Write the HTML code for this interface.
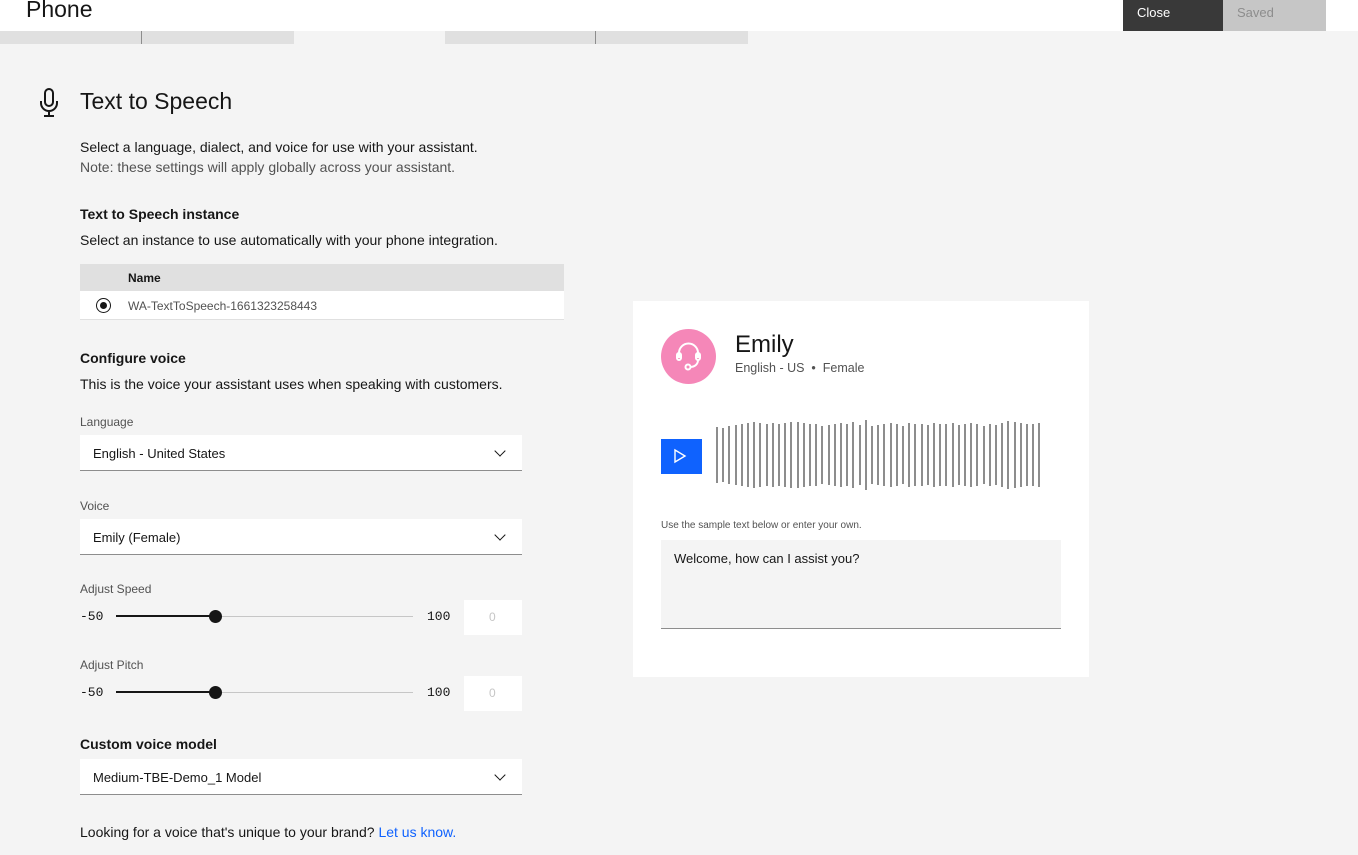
<!DOCTYPE html>
<html><head><meta charset="utf-8"><style>
*{box-sizing:border-box;margin:0;padding:0}
body{width:1358px;height:855px;overflow:hidden;background:#f4f4f4;font-family:"Liberation Sans",sans-serif;color:#161616;position:relative}
.a{position:absolute}
.top{left:0;top:0;width:1358px;height:31px;background:#fff}
.lbl{font-size:12px;color:#525252}
.sel{background:#fff;border-bottom:1px solid #8d8d8d;width:442px;height:36px;font-size:13px;padding:11px 13px}
.chev{position:absolute;right:18px;top:12px;width:8px;height:8px;border-right:1.5px solid #161616;border-bottom:1.5px solid #161616;transform:rotate(45deg)}
.mono{font-family:"Liberation Mono",monospace;font-size:13px}
</style></head><body>
<div class="a top"></div>
<div class="a" style="left:26px;top:-4px;font-size:23px">Phone</div>
<div class="a" style="left:1123px;top:0;width:100px;height:31px;background:#393939;color:#fff;font-size:13px;padding:5px 14px">Close</div>
<div class="a" style="left:1223px;top:0;width:103px;height:31px;background:#c6c6c6;color:#8d8d8d;font-size:13px;padding:5px 14px">Saved</div>
<div class="a" style="left:0;top:31px;width:1358px;height:13px;background:#fff"></div>
<div class="a" style="left:0;top:31px;width:294px;height:13px;background:#e0e0e0"></div>
<div class="a" style="left:141px;top:31px;width:1px;height:13px;background:#8d8d8d"></div>
<div class="a" style="left:294px;top:31px;width:151px;height:13px;background:#f4f4f4"></div>
<div class="a" style="left:445px;top:31px;width:303px;height:13px;background:#e0e0e0"></div>
<div class="a" style="left:595px;top:31px;width:1px;height:13px;background:#8d8d8d"></div>
<div class="a" style="left:748px;top:31px;width:610px;height:13px;background:#f4f4f4"></div>

<svg class="a" style="left:38px;top:88px" width="22" height="30" viewBox="0 0 22 30" fill="none" stroke="#161616" stroke-width="2"><rect x="7" y="1" width="8" height="17" rx="4"/><path d="M3 13v2a8 8 0 0 0 16 0v-2M11 23v5M6 28h10"/></svg>
<div class="a" style="left:80px;top:88px;font-size:23px">Text to Speech</div>
<div class="a" style="left:80px;top:139px;font-size:14px">Select a language, dialect, and voice for use with your assistant.</div>
<div class="a" style="left:80px;top:159px;font-size:14px;color:#525252">Note: these settings will apply globally across your assistant.</div>
<div class="a" style="left:80px;top:206px;font-size:14px;font-weight:bold">Text to Speech instance</div>
<div class="a" style="left:80px;top:232px;font-size:14px">Select an instance to use automatically with your phone integration.</div>
<div class="a" style="left:80px;top:264px;width:484px;height:27px;background:#e0e0e0;font-size:12px;font-weight:bold;padding:7px 48px">Name</div>
<div class="a" style="left:80px;top:291px;width:484px;height:29px;background:#fff;border-bottom:1px solid #e0e0e0;font-size:12px;color:#525252;padding:8px 48px">WA-TextToSpeech-1661323258443</div>
<div class="a" style="left:96px;top:298px;width:15px;height:15px;border:1px solid #161616;border-radius:50%"></div>
<div class="a" style="left:100px;top:302px;width:7px;height:7px;background:#161616;border-radius:50%"></div>
<div class="a" style="left:80px;top:350px;font-size:14px;font-weight:bold">Configure voice</div>
<div class="a" style="left:80px;top:376px;font-size:14px">This is the voice your assistant uses when speaking with customers.</div>
<div class="a lbl" style="left:80px;top:415px">Language</div>
<div class="a sel" style="left:80px;top:435px">English - United States<span class="chev"></span></div>
<div class="a lbl" style="left:80px;top:499px">Voice</div>
<div class="a sel" style="left:80px;top:519px">Emily (Female)<span class="chev"></span></div>

<div class="a lbl" style="left:80px;top:582px">Adjust Speed</div>
<div class="a mono" style="left:80px;top:609px">-50</div>
<div class="a" style="left:116px;top:616px;width:297px;height:1px;background:#c6c6c6"></div>
<div class="a" style="left:116px;top:615px;width:100px;height:2px;background:#161616"></div>
<div class="a" style="left:209px;top:610px;width:13px;height:13px;background:#161616;border-radius:50%"></div>
<div class="a mono" style="left:427px;top:609px">100</div>
<div class="a" style="left:464px;top:600px;width:58px;height:35px;background:#fff;color:#c6c6c6;font-size:12px;padding:10px 25px">0</div>

<div class="a lbl" style="left:80px;top:658px">Adjust Pitch</div>
<div class="a mono" style="left:80px;top:685px">-50</div>
<div class="a" style="left:116px;top:692px;width:297px;height:1px;background:#c6c6c6"></div>
<div class="a" style="left:116px;top:691px;width:100px;height:2px;background:#161616"></div>
<div class="a" style="left:209px;top:686px;width:13px;height:13px;background:#161616;border-radius:50%"></div>
<div class="a mono" style="left:427px;top:685px">100</div>
<div class="a" style="left:464px;top:676px;width:58px;height:35px;background:#fff;color:#c6c6c6;font-size:12px;padding:10px 25px">0</div>

<div class="a" style="left:80px;top:736px;font-size:14px;font-weight:bold">Custom voice model</div>
<div class="a sel" style="left:80px;top:759px">Medium-TBE-Demo_1 Model<span class="chev"></span></div>
<div class="a" style="left:80px;top:824px;font-size:14px">Looking for a voice that's unique to your brand? <span style="color:#0f62fe">Let us know.</span></div>

<div class="a" style="left:633px;top:301px;width:456px;height:376px;background:#fff"></div>
<div class="a" style="left:661px;top:329px;width:55px;height:55px;background:#f587b8;border-radius:50%"></div>
<svg class="a" style="left:672px;top:340px" width="33" height="33" viewBox="0 0 33 33" fill="none" stroke="#fff" stroke-width="2"><path d="M7 18v-5a9.5 9.5 0 0 1 19 0v5"/><rect x="5" y="13" width="4" height="7" rx="2"/><rect x="24" y="13" width="4" height="7" rx="2"/><path d="M26 20c0 4-3 7-8 7"/><circle cx="16" cy="27" r="2.5"/></svg>
<div class="a" style="left:735px;top:331px;font-size:24px">Emily</div>
<div class="a" style="left:735px;top:361px;font-size:12.5px;color:#525252">English - US &nbsp;•&nbsp; Female</div>
<div class="a" style="left:661px;top:439px;width:41px;height:35px;background:#0f62fe"></div>
<svg class="a" style="left:673px;top:448px" width="14" height="16" viewBox="0 0 14 16" fill="none" stroke="#fff" stroke-width="1.4"><path d="M2 2l10 6-10 6z"/></svg>
<div class="a" id="bars" style="left:716px;top:419px;width:330px;height:72px"></div>
<script>
var h=[56,54,58,60,62,64,66,64,62,64,62,64,66,66,64,62,62,58,60,62,64,62,66,60,70,58,60,62,64,62,58,64,62,62,60,64,62,62,64,60,62,64,62,58,62,60,64,68,66,64,62,62,64];
var b=document.getElementById('bars'),s='';
for(var i=0;i<h.length;i++){s+='<div style="position:absolute;left:'+(i*6.2)+'px;top:'+(36-h[i]/2)+'px;width:2px;height:'+h[i]+'px;background:#8d8d8d"></div>';}
b.innerHTML=s;
</script>
<div class="a" style="left:661px;top:520px;font-size:10px;color:#525252">Use the sample text below or enter your own.</div>
<div class="a" style="left:661px;top:540px;width:400px;height:89px;background:#f4f4f4;border-bottom:1px solid #8d8d8d;font-size:13px;padding:11px 13px">Welcome, how can I assist you?</div>
</body></html>
